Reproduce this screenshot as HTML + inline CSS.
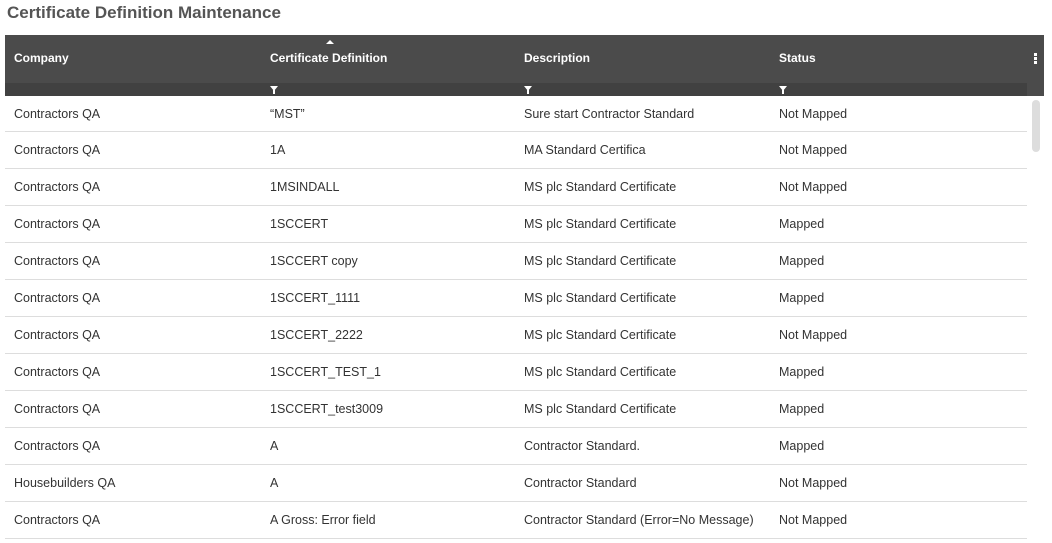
<!DOCTYPE html>
<html><head><style>
body{margin:0;width:1052px;height:543px;overflow:hidden;background:#fff;font-family:"Liberation Sans",sans-serif;color:#333;}
.title{position:absolute;left:7px;top:3px;font-size:17px;font-weight:bold;color:#555;}
.hdr{position:absolute;left:5px;top:35px;width:1039px;height:61px;background:#4b4b4b;}
.filt{position:absolute;left:5px;top:83px;width:1022px;height:13px;background:#414141;}
.h{position:absolute;top:51px;color:#fff;font-size:12px;font-weight:bold;}
.f{position:absolute;top:86px;width:0;height:0;border-left:4px solid transparent;border-right:4px solid transparent;border-top:5px solid #fff;}
.fs{position:absolute;top:90px;width:2px;height:4px;background:#fff;}
.row{position:absolute;left:5px;width:1022px;border-bottom:1px solid #ddd;font-size:12.5px;}
.row span{position:absolute;top:50%;transform:translateY(-50%);white-space:nowrap;}
</style></head><body>
<div class="title">Certificate Definition Maintenance</div>
<div class="hdr"></div><div class="filt"></div>
<div class="h" style="left:14px">Company</div>
<div class="h" style="left:270px">Certificate Definition</div>
<div style="position:absolute;left:326px;top:40px;border-left:4px solid transparent;border-right:4px solid transparent;border-bottom:4px solid #fff"></div>
<div class="h" style="left:524px">Description</div>
<div class="h" style="left:779px">Status</div>
<div style="position:absolute;left:1034px;top:53px;width:3px;height:11px;background:repeating-linear-gradient(#fff 0 3px,transparent 3px 4px)"></div>
<div class="f" style="left:270px"></div><div class="fs" style="left:273px"></div>
<div class="f" style="left:524px"></div><div class="fs" style="left:527px"></div>
<div class="f" style="left:779px"></div><div class="fs" style="left:782px"></div>
<div style="position:absolute;left:1032px;top:100px;width:8px;height:52px;border-radius:4px;background:#ddd"></div>
<div id="rows"></div>
<script>
var d=[["Contractors QA","“MST”","Sure start Contractor Standard","Not Mapped"],
["Contractors QA","1A","MA Standard Certifica","Not Mapped"],
["Contractors QA","1MSINDALL","MS plc Standard Certificate","Not Mapped"],
["Contractors QA","1SCCERT","MS plc Standard Certificate","Mapped"],
["Contractors QA","1SCCERT copy","MS plc Standard Certificate","Mapped"],
["Contractors QA","1SCCERT_1111","MS plc Standard Certificate","Mapped"],
["Contractors QA","1SCCERT_2222","MS plc Standard Certificate","Not Mapped"],
["Contractors QA","1SCCERT_TEST_1","MS plc Standard Certificate","Mapped"],
["Contractors QA","1SCCERT_test3009","MS plc Standard Certificate","Mapped"],
["Contractors QA","A","Contractor Standard.","Mapped"],
["Housebuilders QA","A","Contractor Standard","Not Mapped"],
["Contractors QA","A Gross: Error field","Contractor Standard (Error=No Message)","Not Mapped"]];
var h="",x=[9,265,519,774];
d.forEach(function(r,i){var top=i==0?96:132+(i-1)*37,ht=i==0?35:36;
h+='<div class="row" style="top:'+top+'px;height:'+ht+'px">';
r.forEach(function(c,j){h+='<span style="left:'+x[j]+'px">'+c+'</span>';});h+='</div>';});
document.getElementById('rows').innerHTML=h;
</script>
</body></html>
